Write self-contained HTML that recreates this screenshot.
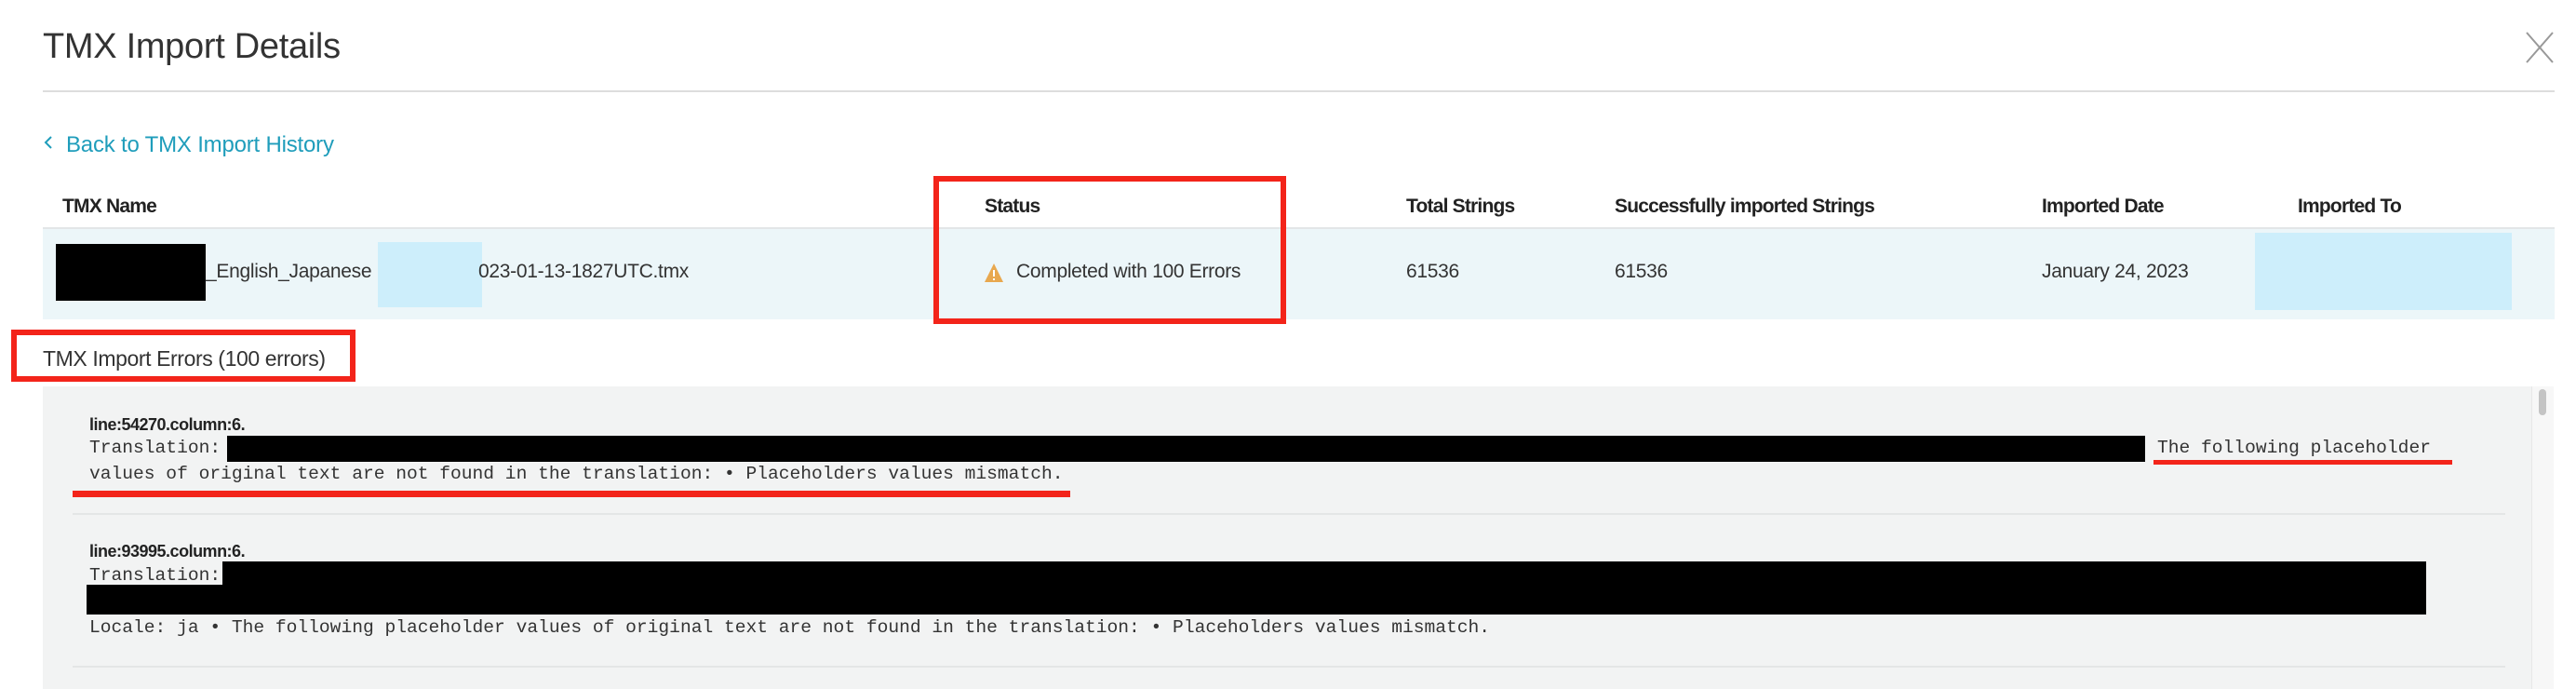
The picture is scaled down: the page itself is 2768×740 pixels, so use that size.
<!DOCTYPE html>
<html><head><meta charset="utf-8"><style>
*{margin:0;padding:0;box-sizing:border-box}
body{width:2768px;height:740px;background:#fff;position:relative;overflow:hidden;font-family:"Liberation Sans",sans-serif;color:#333}
.a{position:absolute;white-space:nowrap}
.h{font-weight:bold;font-size:21px;color:#222;top:210px;letter-spacing:-0.8px}
.c{font-size:21px;color:#333;top:280px;letter-spacing:-0.3px}
.m{font-family:"Liberation Mono",monospace;font-size:19.6px;color:#333}
.b{font-weight:bold;font-size:18px;color:#222;letter-spacing:-0.5px}
</style></head><body>
<div class="a" style="left:46px;top:29px;font-size:38px;color:#333;letter-spacing:-0.3px">TMX Import Details</div>
<svg class="a" style="left:2713px;top:34px" width="32" height="34" viewBox="0 0 32 34"><path d="M2 1 L30 33 M30 1 L2 33" stroke="#999" stroke-width="2" fill="none"/></svg>
<div class="a" style="left:46px;top:97px;width:2699px;height:2px;background:#ddd"></div>

<svg class="a" style="left:46px;top:144px" width="12" height="20" viewBox="0 0 12 20"><path d="M9 3 L3 9 L9 15" stroke="#1f9dbb" stroke-width="2" fill="none"/></svg>
<div class="a" style="left:71px;top:142px;font-size:24px;color:#1f9dbb;letter-spacing:-0.2px">Back to TMX Import History</div>

<div class="a h" style="left:67px">TMX Name</div>
<div class="a h" style="left:1058px">Status</div>
<div class="a h" style="left:1511px">Total Strings</div>
<div class="a h" style="left:1735px">Successfully imported Strings</div>
<div class="a h" style="left:2194px">Imported Date</div>
<div class="a h" style="left:2469px">Imported To</div>
<div class="a" style="left:46px;top:244px;width:2699px;height:2px;background:#e3e6e8"></div>
<div class="a" style="left:46px;top:246px;width:2699px;height:97px;background:#ecf6f9"></div>

<div class="a" style="left:60px;top:262px;width:161px;height:61px;background:#000"></div>
<div class="a c" style="left:221px">_English_Japanese</div>
<div class="a" style="left:406px;top:260px;width:112px;height:70px;background:#cdeefb"></div>
<div class="a c" style="left:514px">023-01-13-1827UTC.tmx</div>
<svg class="a" style="left:1057px;top:282px" width="22" height="22" viewBox="0 0 22 22"><path d="M11 1 L21 21 L1 21 Z" fill="#e8a84f"/><rect x="10" y="8" width="2" height="7" fill="#fff"/><rect x="10" y="17" width="2" height="2" fill="#fff"/></svg>
<div class="a c" style="left:1092px">Completed with 100 Errors</div>
<div class="a c" style="left:1511px">61536</div>
<div class="a c" style="left:1735px">61536</div>
<div class="a c" style="left:2194px">January 24, 2023</div>
<div class="a" style="left:2423px;top:250px;width:276px;height:83px;background:#cdeefb"></div>
<div class="a" style="left:1003px;top:189px;width:379px;height:159px;border:6px solid #f3241a"></div>

<div class="a" style="left:46px;top:372px;font-size:23px;color:#333;letter-spacing:-0.4px">TMX Import Errors (100 errors)</div>
<div class="a" style="left:12px;top:354px;width:370px;height:56px;border:6px solid #f3241a"></div>

<div class="a" style="left:46px;top:415px;width:2674px;height:325px;background:#f2f3f3"></div>
<div class="a" style="left:2720px;top:415px;width:48px;height:325px;background:#fff"></div>
<div class="a" style="left:2720px;top:415px;width:24px;height:325px;background:#f7f7f7;border-left:1px solid #e8e8e8"></div>
<div class="a" style="left:2728px;top:418px;width:8px;height:28px;border-radius:4px;background:#c4c4c4"></div>

<div class="a b" style="left:96px;top:446px">line:54270.column:6.</div>
<div class="a m" style="left:96px;top:470px">Translation:</div>
<div class="a" style="left:244px;top:468px;width:2061px;height:28px;background:#000"></div>
<div class="a m" style="left:2318px;top:470px">The following placeholder</div>
<div class="a" style="left:2314px;top:494px;width:321px;height:5px;background:#f3241a"></div>
<div class="a m" style="left:96px;top:498px">values of original text are not found in the translation: • Placeholders values mismatch.</div>
<div class="a" style="left:78px;top:527px;width:1072px;height:7px;background:#f3241a"></div>
<div class="a" style="left:78px;top:551px;width:2614px;height:2px;background:#e4e6e6"></div>

<div class="a b" style="left:96px;top:582px">line:93995.column:6.</div>
<div class="a m" style="left:96px;top:607px">Translation:</div>
<div class="a" style="left:239px;top:603px;width:2368px;height:57px;background:#000"></div>
<div class="a" style="left:93px;top:628px;width:150px;height:32px;background:#000"></div>
<div class="a m" style="left:96px;top:663px">Locale: ja • The following placeholder values of original text are not found in the translation: • Placeholders values mismatch.</div>
<div class="a" style="left:78px;top:715px;width:2614px;height:2px;background:#e4e6e6"></div>
</body></html>
